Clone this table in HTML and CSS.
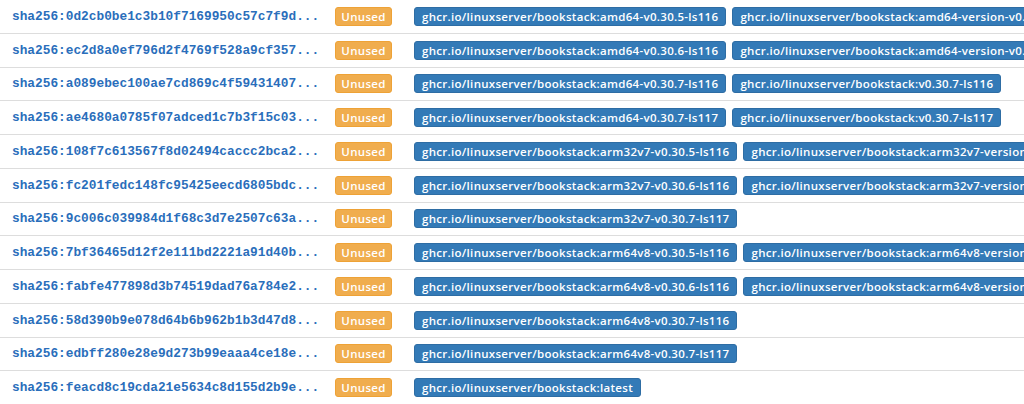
FILE: index.html
```html
<!DOCTYPE html>
<html>
<head>
<meta charset="utf-8">
<link rel="stylesheet" href="styles.css">
</head>
<body>
<div class="list">
  <div class="row"><span class="hash">sha256:0d2cb0be1c3b10f7169950c57c7f9d...</span><span class="state"><span class="badge">Unused</span></span><span class="tags"><span class="tag">ghcr.io/linuxserver/bookstack:amd64-v0.30.5-ls116</span><span class="tag">ghcr.io/linuxserver/bookstack:amd64-version-v0.30.5</span></span></div>
  <div class="row"><span class="hash">sha256:ec2d8a0ef796d2f4769f528a9cf357...</span><span class="state"><span class="badge">Unused</span></span><span class="tags"><span class="tag">ghcr.io/linuxserver/bookstack:amd64-v0.30.6-ls116</span><span class="tag">ghcr.io/linuxserver/bookstack:amd64-version-v0.30.6</span></span></div>
  <div class="row"><span class="hash">sha256:a089ebec100ae7cd869c4f59431407...</span><span class="state"><span class="badge">Unused</span></span><span class="tags"><span class="tag">ghcr.io/linuxserver/bookstack:amd64-v0.30.7-ls116</span><span class="tag">ghcr.io/linuxserver/bookstack:v0.30.7-ls116</span></span></div>
  <div class="row"><span class="hash">sha256:ae4680a0785f07adced1c7b3f15c03...</span><span class="state"><span class="badge">Unused</span></span><span class="tags"><span class="tag">ghcr.io/linuxserver/bookstack:amd64-v0.30.7-ls117</span><span class="tag">ghcr.io/linuxserver/bookstack:v0.30.7-ls117</span></span></div>
  <div class="row"><span class="hash">sha256:108f7c613567f8d02494caccc2bca2...</span><span class="state"><span class="badge">Unused</span></span><span class="tags"><span class="tag">ghcr.io/linuxserver/bookstack:arm32v7-v0.30.5-ls116</span><span class="tag">ghcr.io/linuxserver/bookstack:arm32v7-version-v0.30.5</span></span></div>
  <div class="row"><span class="hash">sha256:fc201fedc148fc95425eecd6805bdc...</span><span class="state"><span class="badge">Unused</span></span><span class="tags"><span class="tag">ghcr.io/linuxserver/bookstack:arm32v7-v0.30.6-ls116</span><span class="tag">ghcr.io/linuxserver/bookstack:arm32v7-version-v0.30.6</span></span></div>
  <div class="row"><span class="hash">sha256:9c006c039984d1f68c3d7e2507c63a...</span><span class="state"><span class="badge">Unused</span></span><span class="tags"><span class="tag">ghcr.io/linuxserver/bookstack:arm32v7-v0.30.7-ls117</span></span></div>
  <div class="row"><span class="hash">sha256:7bf36465d12f2e111bd2221a91d40b...</span><span class="state"><span class="badge">Unused</span></span><span class="tags"><span class="tag">ghcr.io/linuxserver/bookstack:arm64v8-v0.30.5-ls116</span><span class="tag">ghcr.io/linuxserver/bookstack:arm64v8-version-v0.30.5</span></span></div>
  <div class="row"><span class="hash">sha256:fabfe477898d3b74519dad76a784e2...</span><span class="state"><span class="badge">Unused</span></span><span class="tags"><span class="tag">ghcr.io/linuxserver/bookstack:arm64v8-v0.30.6-ls116</span><span class="tag">ghcr.io/linuxserver/bookstack:arm64v8-version-v0.30.6</span></span></div>
  <div class="row"><span class="hash">sha256:58d390b9e078d64b6b962b1b3d47d8...</span><span class="state"><span class="badge">Unused</span></span><span class="tags"><span class="tag">ghcr.io/linuxserver/bookstack:arm64v8-v0.30.7-ls116</span></span></div>
  <div class="row"><span class="hash">sha256:edbff280e28e9d273b99eaaa4ce18e...</span><span class="state"><span class="badge">Unused</span></span><span class="tags"><span class="tag">ghcr.io/linuxserver/bookstack:arm64v8-v0.30.7-ls117</span></span></div>
  <div class="row"><span class="hash">sha256:feacd8c19cda21e5634c8d155d2b9e...</span><span class="state"><span class="badge">Unused</span></span><span class="tags"><span class="tag">ghcr.io/linuxserver/bookstack:latest</span></span></div>
</div>
</body>
</html>
```
FILE: styles.css
```css
html, body {
  margin: 0;
  padding: 0;
  background: #fff;
  overflow: hidden;
}
.list {
  width: 1024px;
  overflow: hidden;
}
.row {
  display: flex;
  align-items: center;
  height: 33.75px;
  box-sizing: border-box;
  border-bottom: 1px solid #dddddd;
  white-space: nowrap;
}
.hash {
  box-sizing: border-box;
  width: 335px;
  padding-left: 12px;
  font-family: "Liberation Mono", monospace;
  font-weight: bold;
  font-size: 12.8px;
  color: #2a6ebb;
  flex: none;
}
.state {
  width: 79px;
  flex: none;
  display: flex;
}
.badge {
  display: inline-block;
  background: #f0ad4e;
  color: #fff;
  font-family: "Open Sans", sans-serif;
  font-weight: 600;
  font-size: 11.5px;
  line-height: 17px;
  height: 19px;
  box-sizing: border-box;
  width: 57px;
  text-align: center;
  border: 1px solid #eea236;
  border-radius: 3px;
  letter-spacing: 0.3px;
}
.tags {
  display: flex;
  gap: 6px;
  flex: none;
}
.tag {
  display: inline-block;
  background: #337ab7;
  border: 1px solid #2e6da4;
  color: #fff;
  font-family: "Open Sans", sans-serif;
  font-weight: 600;
  font-size: 11.5px;
  line-height: 17px;
  height: 19px;
  box-sizing: border-box;
  padding: 0 7px;
  border-radius: 3px;
  letter-spacing: 0.3px;
}
```
